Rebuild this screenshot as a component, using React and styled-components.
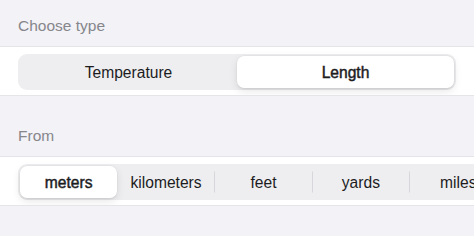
import React from "react";
import styled, { createGlobalStyle } from "styled-components";

const GlobalStyle = createGlobalStyle`
  html, body {
    margin: 0;
    padding: 0;
    background: #f2f2f7;
  }
  body {
    font-family: "Liberation Sans", Arial, sans-serif;
    -webkit-font-smoothing: antialiased;
  }
`;

const Page = styled.div`
  width: 474px;
  height: 236px;
  overflow: hidden;
  background: #f2f2f7;
`;

const Section = styled.section`
  margin-top: ${(p) => p.$offset || 0}px;
`;

const Header = styled.div`
  padding: 17px 18px 11px;
  font-size: 15.5px;
  line-height: 18px;
  color: #86868b;
`;

const Row = styled.div`
  height: 50px;
  box-sizing: border-box;
  background: #fff;
  border-top: 1px solid #e4e4e9;
  border-bottom: 1px solid #e4e4e9;
  display: flex;
  align-items: center;
  padding: 1px 18px 0;
  overflow: hidden;
`;

const Track = styled.div`
  display: flex;
  flex-shrink: 0;
  width: ${(p) => (p.$width ? `${p.$width}px` : "100%")};
  height: 36px;
  box-sizing: border-box;
  padding: 2px;
  border-radius: 9px;
  background: #eeeef0;
`;

const Segment = styled.div`
  position: relative;
  flex: ${(p) => (p.$width ? `0 0 ${p.$width}px` : "1 1 0")};
  display: flex;
  align-items: center;
  justify-content: center;
  padding-top: 2px;
  border-radius: 7px;
  font-size: 15.6px;
  color: #1c1c1e;
  -webkit-text-stroke: ${(p) => (p.$active ? "0.45px #1c1c1e" : "0")};
  background: ${(p) => (p.$active ? "#fff" : "transparent")};
  box-shadow: ${(p) =>
    p.$active
      ? "0 3px 8px rgba(0,0,0,0.10), 0 2px 1px rgba(0,0,0,0.03), 0 0 0 0.5px rgba(0,0,0,0.05)"
      : "none"};

  &::before {
    content: "";
    display: ${(p) => (p.$divider ? "block" : "none")};
    position: absolute;
    left: -0.5px;
    top: 50%;
    width: 1px;
    height: 21px;
    transform: translateY(-50%);
    background: #d6d6db;
  }
`;

function Segmented({ options, selected, width, segmentWidth }) {
  return (
    <Track $width={width}>
      {options.map((opt, i) => {
        const divider = i > 0 && i !== selected && i - 1 !== selected;
        return (
          <Segment
            key={opt}
            $active={i === selected}
            $divider={divider}
            $width={segmentWidth}
          >
            {opt}
          </Segment>
        );
      })}
    </Track>
  );
}

export default function App() {
  return (
    <Page>
      <GlobalStyle />
      <Section>
        <Header>Choose type</Header>
        <Row>
          <Segmented options={["Temperature", "Length"]} selected={1} />
        </Row>
      </Section>
      <Section $offset={14}>
        <Header>From</Header>
        <Row>
          <Segmented
            options={["meters", "kilometers", "feet", "yards", "miles"]}
            selected={0}
            width={491}
            segmentWidth={97.4}
          />
        </Row>
      </Section>
    </Page>
  );
}
